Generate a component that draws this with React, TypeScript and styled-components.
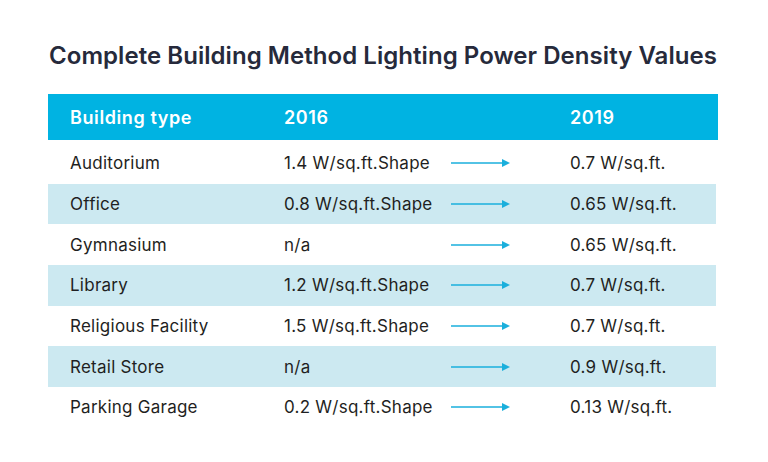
import styled, { createGlobalStyle } from 'styled-components';

const GlobalStyle = createGlobalStyle`
  body {
    margin: 0;
    background: #ffffff;
    font-family: Inter, "Open Sans", sans-serif;
  }
`;

const Page = styled.div`
  width: 768px;
  height: 462px;
  padding: 41px 50px 0 48px;
  box-sizing: border-box;
`;

const Title = styled.h1`
  margin: 0 0 23px;
  font-size: 24px;
  font-weight: 600;
  line-height: 30px;
  color: #262a3b;
  text-align: center;
  letter-spacing: 0.05px;
`;

const Table = styled.div`
  display: flex;
  flex-direction: column;
`;

const Row = styled.div<{ $variant?: 'head' | 'striped' | 'plain' }>`
  display: grid;
  grid-template-columns: 214px 167px 119px 1fr;
  align-items: center;
  padding-left: 22px;
  height: ${p => (p.$variant === 'head' ? '46px' : '40.7px')};
  margin-bottom: ${p => (p.$variant === 'head' ? '3px' : '0')};
  margin-right: ${p => (p.$variant === 'head' ? '0' : '2px')};
  box-sizing: border-box;
  background: ${p =>
    p.$variant === 'head' ? '#00b3e2' : p.$variant === 'striped' ? '#cce9f1' : 'transparent'};
  color: ${p => (p.$variant === 'head' ? '#ffffff' : '#1f1f22')};
  font-size: ${p => (p.$variant === 'head' ? '18px' : '17px')};
  font-weight: ${p => (p.$variant === 'head' ? 600 : 400)};
  letter-spacing: ${p => (p.$variant === 'head' ? '0.6px' : '0.25px')};
`;

const Cell = styled.div`
  white-space: nowrap;
`;

const ArrowCell = styled.div`
  display: flex;
  align-items: center;
  svg {
    display: block;
  }
`;

const Arrow = () => (
  <svg width="60" height="10" viewBox="0 0 60 10">
    <line x1="0" y1="5" x2="52" y2="5" stroke="#1aafdc" strokeWidth="1.6" />
    <path d="M51 1 L59 5 L51 9 Z" fill="#1aafdc" />
  </svg>
);

const rows = [
  ['Auditorium', '1.4 W/sq.ft.Shape', '0.7 W/sq.ft.'],
  ['Office', '0.8 W/sq.ft.Shape', '0.65 W/sq.ft.'],
  ['Gymnasium', 'n/a', '0.65 W/sq.ft.'],
  ['Library', '1.2 W/sq.ft.Shape', '0.7 W/sq.ft.'],
  ['Religious Facility', '1.5 W/sq.ft.Shape', '0.7 W/sq.ft.'],
  ['Retail Store', 'n/a', '0.9 W/sq.ft.'],
  ['Parking Garage', '0.2 W/sq.ft.Shape', '0.13 W/sq.ft.'],
];

export default function App() {
  return (
    <>
      <GlobalStyle />
      <Page>
        <Title>Complete Building Method Lighting Power Density Values</Title>
        <Table>
          <Row $variant="head">
            <Cell>Building type</Cell>
            <Cell>2016</Cell>
            <Cell />
            <Cell>2019</Cell>
          </Row>
          {rows.map(([type, before, after], i) => (
            <Row key={type} $variant={i % 2 === 1 ? 'striped' : 'plain'}>
              <Cell>{type}</Cell>
              <Cell>{before}</Cell>
              <ArrowCell>
                <Arrow />
              </ArrowCell>
              <Cell>{after}</Cell>
            </Row>
          ))}
        </Table>
      </Page>
    </>
  );
}
